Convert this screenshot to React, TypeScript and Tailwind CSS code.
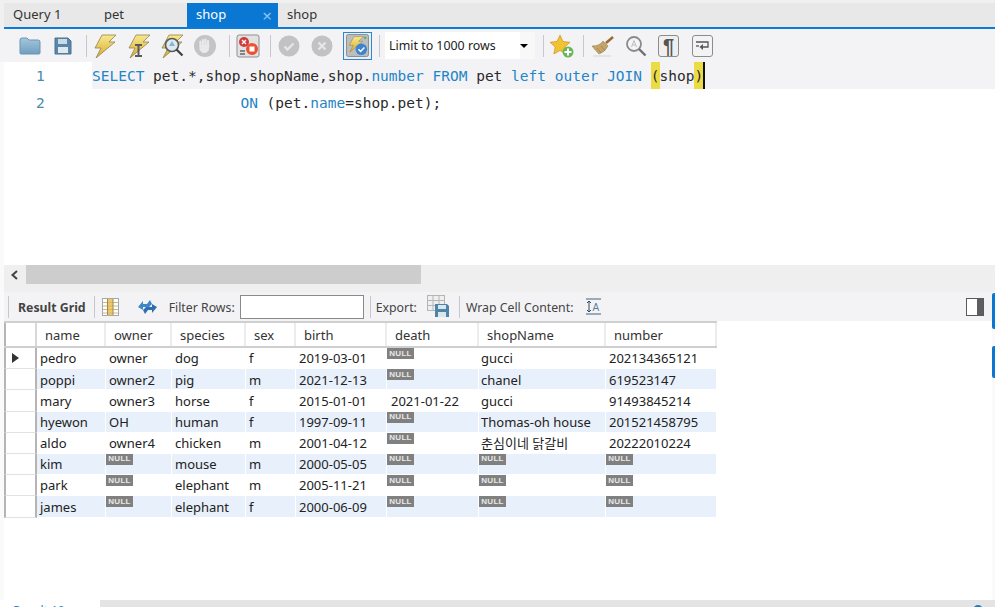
import { ReactNode } from "react";

const Sep = ({ ml }: { ml: string }) => <div className={`${ml} h-[22px] w-px shrink-0 bg-[#c8c8cc]`} />;

const Slot = ({ ml, children }: { ml: string; children: ReactNode }) => (
  <div className={`${ml} flex h-6 w-6 shrink-0 items-center justify-center`}>{children}</div>
);

const Bolt = ({ id }: { id: string }) => (
  <>
    <defs>
      <linearGradient id={id} x1="0" y1="0" x2="0" y2="1">
        <stop offset="0" stopColor="#f8e88e" />
        <stop offset="1" stopColor="#d8ab2c" />
      </linearGradient>
    </defs>
    <path d="M9 1h14l-7 7h6L3 24l5-10H2z" fill={`url(#${id})`} stroke="#8f8450" strokeWidth="0.8" />
  </>
);

const FolderIcon = () => (
  <svg width="22" height="18" viewBox="0 0 22 18">
    <defs>
      <linearGradient id="fld" x1="0" y1="0" x2="0" y2="1">
        <stop offset="0" stopColor="#a5c6dc" />
        <stop offset="1" stopColor="#6f9fbf" />
      </linearGradient>
    </defs>
    <path d="M1 3q0-2 2-2h5l2 2h9q2 0 2 2v11q0 1-1 1H2q-1 0-1-1z" fill="url(#fld)" stroke="#6a95b3" />
  </svg>
);

const SaveIcon = () => (
  <svg width="18" height="18" viewBox="0 0 18 18">
    <path d="M1 1h13l3 3v13H1z" fill="#5a87a8" stroke="#4a7291" />
    <rect x="4" y="2" width="9" height="5" fill="#c9dbe7" />
    <rect x="4" y="10" width="10" height="6" fill="#dfe9f0" />
  </svg>
);

const BoltIcon = () => (
  <svg width="24" height="24" viewBox="0 0 24 24">
    <Bolt id="b1" />
  </svg>
);

const BoltCursorIcon = () => (
  <svg width="24" height="24" viewBox="0 0 24 24">
    <Bolt id="b2" />
    <path d="M8 11h7M8 22h7M11.500 11v11" stroke="#5a5a5a" strokeWidth="2" fill="none" />
  </svg>
);

const BoltSearchIcon = () => (
  <svg width="24" height="24" viewBox="0 0 24 24">
    <Bolt id="b3" />
    <circle cx="12" cy="11" r="6.500" fill="#dcebf2" stroke="#5a5a5a" strokeWidth="1.600" />
    <path d="M12 7l3 5H9z" fill="#8ab4cf" />
    <path d="M16.500 15.500l6 6" stroke="#3f3f3f" strokeWidth="2.200" />
  </svg>
);

const HandIcon = () => (
  <svg width="24" height="24" viewBox="0 0 24 24">
    <circle cx="12" cy="12" r="11" fill="#c4c4c4" />
    <path d="M7.500 11V7.500M10 11V6M12.500 11V5.500M15 11.500V7" stroke="#e9e9e9" strokeWidth="2.200" fill="none" strokeLinecap="round" />
    <path d="M6.500 11h10l-1 6-3 2h-3l-3-3z" fill="#e9e9e9" />
  </svg>
);

const StopIcon = () => (
  <svg width="24" height="24" viewBox="0 0 24 24">
    <rect x="1" y="1" width="22" height="22" rx="2" fill="#e2e2e2" stroke="#8f8f8f" />
    <circle cx="8" cy="8" r="5" fill="#cf3a3a" />
    <path d="M6 6l4 4M10 6l-4 4" stroke="#fff" strokeWidth="1.300" />
    <circle cx="16" cy="15" r="6" fill="#ea5236" />
    <rect x="13.500" y="12.500" width="5" height="5" fill="#fff" />
    <path d="M4 17h5M4 20h5" stroke="#666" strokeWidth="1.300" />
  </svg>
);

const CheckIcon = () => (
  <svg width="22" height="22" viewBox="0 0 22 22">
    <circle cx="11" cy="11" r="10.500" fill="#c2c2c2" />
    <path d="M6.500 11.500l3 3 6-6" stroke="#e6e6e6" strokeWidth="2.400" fill="none" />
  </svg>
);

const CrossIcon = () => (
  <svg width="22" height="22" viewBox="0 0 22 22">
    <circle cx="11" cy="11" r="10.500" fill="#c2c2c2" />
    <path d="M7.500 7.500l7 7M14.500 7.500l-7 7" stroke="#e6e6e6" strokeWidth="2.400" />
  </svg>
);

const ToggleIcon = () => (
  <div className="ml-[9px] flex h-[28px] w-[29px] shrink-0 items-center justify-center border border-[#2f86cf] bg-[#e9eef3]">
    <svg width="23" height="23" viewBox="0 0 24 24">
      <rect x="0.500" y="0.500" width="23" height="23" rx="2" fill="#bdbdbd" stroke="#8c8c8c" />
      <g transform="translate(2 2) scale(0.7)">
        <Bolt id="b4" />
      </g>
      <circle cx="16" cy="16" r="6" fill="#3d84cf" />
      <path d="M13 16l2.200 2.200 4-4" stroke="#fff" strokeWidth="1.500" fill="none" />
      <circle cx="20" cy="4" r="1.500" fill="#5db55d" />
    </svg>
  </div>
);

const StarIcon = () => (
  <svg width="24" height="24" viewBox="0 0 24 24">
    <path d="M10 1l3 6.500 7 .8-5.200 4.700 1.400 7L10 16.500 3.800 20l1.400-7L0 8.300l7-.8z" fill="#f2c230" stroke="#c8952a" strokeWidth="0.700" />
    <circle cx="18" cy="18" r="5.500" fill="#6cb65a" />
    <path d="M18 14.500v7M14.500 18h7" stroke="#fff" strokeWidth="2" />
  </svg>
);

const BroomIcon = () => (
  <svg width="24" height="22" viewBox="0 0 24 22">
    <path d="M15 8l7-6" stroke="#9a6a35" strokeWidth="2.500" />
    <path d="M1 11q8 0 11-5l5 5q-3 6-9 8-3-3-7-8z" fill="#c4a468" stroke="#9b8050" strokeWidth="0.600" />
    <path d="M6 13l4 5M10 11l4 5" stroke="#a78a52" />
    <path d="M2 21h18" stroke="#d5d5d5" />
  </svg>
);

const FindIcon = () => (
  <svg width="22" height="22" viewBox="0 0 22 22">
    <circle cx="9" cy="9" r="7" fill="#f5f5f5" stroke="#8a8a8a" strokeWidth="1.800" />
    <path d="M6.500 12L9 5.500l2.500 6.500M7.500 10h3" stroke="#bdbdbd" fill="none" />
    <path d="M14 14l6.500 6.500" stroke="#6f6f6f" strokeWidth="2.400" />
  </svg>
);

const ParaIcon = () => (
  <div className="ml-[10px] flex h-[22px] w-[21px] shrink-0 items-center justify-center rounded-[3px] border border-[#8c8c8c] bg-[#efefef] font-['Liberation_Sans',sans-serif] text-[20px] leading-none font-bold text-[#555]">
    ¶
  </div>
);

const WrapIcon = () => (
  <div className="ml-[13px] flex h-[22px] w-[21px] shrink-0 items-center justify-center rounded-[3px] border border-[#8c8c8c] bg-[#f3f3f3]">
    <svg width="14" height="12" viewBox="0 0 14 12">
      <path d="M0 2h12v5H6" stroke="#555" strokeWidth="1.300" fill="none" />
      <path d="M7 4L3.500 7 7 10z" fill="#555" />
      <path d="M0 6h3" stroke="#555" strokeWidth="1.300" />
    </svg>
  </div>
);

const ColumnsIcon = () => (
  <svg width="17" height="18" viewBox="0 0 17 18">
    <rect x="0.500" y="0.500" width="16" height="17" fill="#fff" stroke="#a8a8a8" />
    <rect x="5.500" y="1" width="5.500" height="16" fill="#f2c85a" />
    <path d="M1 4.500h15M1 8h15M1 11.500h15M1 15h15" stroke="#c8b98a" />
    <path d="M5.500 1v16M11 1v16" stroke="#a08a4a" />
  </svg>
);

const RefreshIcon = () => (
  <svg width="21" height="18" viewBox="0 0 21 18">
    <path d="M1 9l5-6v3h4l3-4 2 4-3 3H6v3z" fill="#3f86c7" />
    <path d="M20 9l-5 6v-3h-4l-3 4-2-4 3-3h6V6z" fill="#2f6faf" />
  </svg>
);

const ExportIcon = () => (
  <svg width="23" height="23" viewBox="0 0 23 23">
    <rect x="0.500" y="0.500" width="17" height="15" fill="#efefef" stroke="#b5b5b5" />
    <path d="M6 1v14M12 1v14M1 5.500h16M1 10.500h16" stroke="#b5b5b5" />
    <path d="M8 9h12l2 2v11H8z" fill="#4f84a8" />
    <rect x="11" y="10" width="8" height="4" fill="#d9e6ee" />
    <rect x="11" y="17" width="8" height="5" fill="#d9e6ee" />
  </svg>
);

const WrapCellIcon = () => (
  <svg width="15" height="17" viewBox="0 0 15 17">
    <path d="M0 1h15M0 16h15" stroke="#44617a" strokeWidth="1.200" />
    <path d="M3 3v11M1 5l2-2 2 2M1 12l2 2 2-2" stroke="#2c4a62" fill="none" />
    <text x="6.500" y="13" fontSize="10" fontFamily="Liberation Sans" fill="#5b7f9b">A</text>
  </svg>
);

const PanelIcon = () => (
  <div className="mr-2 flex h-[18px] w-[18px] border border-[#5a5a5a] bg-white">
    <div className="ml-auto h-full w-[6px] bg-[#5e5e5e]" />
  </div>
);

const Null = () => (
  <div className="flex h-[11px] w-[27px] items-center justify-center bg-[#808080] font-['Liberation_Sans',sans-serif] text-[8px] leading-none font-bold tracking-[0.3px] text-[#e8e8e8]">
    NULL
  </div>
);

const columns = [
  { name: "name", w: "w-[69px]", pad: "pl-[3px]" },
  { name: "owner", w: "w-[66px]", pad: "pl-[3px]" },
  { name: "species", w: "w-[74px]", pad: "pl-[3px]" },
  { name: "sex", w: "w-[50px]", pad: "pl-[3px]" },
  { name: "birth", w: "w-[91px]", pad: "pl-[3px]" },
  { name: "death", w: "w-[92px]", pad: "pl-[4px]" },
  { name: "shopName", w: "w-[127px]", pad: "pl-[2px]" },
  { name: "number", w: "w-[111px]", pad: "pl-[3px]" },
];

const rows: (string | null)[][] = [
  ["pedro", "owner", "dog", "f", "2019-03-01", null, "gucci", "202134365121"],
  ["poppi", "owner2", "pig", "m", "2021-12-13", null, "chanel", "619523147"],
  ["mary", "owner3", "horse", "f", "2015-01-01", "2021-01-22", "gucci", "91493845214"],
  ["hyewon", "OH", "human", "f", "1997-09-11", null, "Thomas-oh house", "201521458795"],
  ["aldo", "owner4", "chicken", "m", "2001-04-12", null, "춘심이네 닭갈비", "20222010224"],
  ["kim", null, "mouse", "m", "2000-05-05", null, null, null],
  ["park", null, "elephant", "m", "2005-11-21", null, null, null],
  ["james", null, "elephant", "f", "2000-06-09", null, null, null],
];

const K = ({ children }: { children: ReactNode }) => <span className="text-[#1f85c6]">{children}</span>;

export default function App() {
  return (
    <div className="relative flex h-[607px] w-[995px] flex-col overflow-hidden bg-[#fafafa] font-['Noto_Sans','Noto_Sans_CJK_KR',sans-serif] text-[12px] text-[#222]">
      {/* tabs */}
      <div className="bg-[#f0f0f0]">
        <div className="h-[3px]" />
        <div className="ml-1 flex h-6 bg-[#e8e8e8] pl-[9px] text-[13px] text-[#333]">
          <div className="flex w-[91px] items-center">Query 1</div>
          <div className="flex w-[83px] items-center">pet</div>
          <div className="flex w-[91px] items-center justify-between bg-[#0a78d2] pr-[6px] pl-[9px] text-white">
            <span>shop</span>
            <span className="text-[17px] leading-none text-[#8cc4ee]">×</span>
          </div>
          <div className="flex items-center pl-[9px]">shop</div>
        </div>
        <div className="ml-1 h-[2px] bg-[#0a7bd6]" />
      </div>

      {/* sql toolbar */}
      <div className="flex h-[33px] shrink-0 items-center bg-[#f3f3f6] pl-1">
        <Slot ml="ml-[14px]"><FolderIcon /></Slot>
        <Slot ml="ml-[9px]"><SaveIcon /></Slot>
        <Sep ml="ml-[11px]" />
        <Slot ml="ml-[6px]"><BoltIcon /></Slot>
        <Slot ml="ml-[10px]"><BoltCursorIcon /></Slot>
        <Slot ml="ml-[9px]"><BoltSearchIcon /></Slot>
        <Slot ml="ml-[9px]"><HandIcon /></Slot>
        <Sep ml="ml-[12px]" />
        <Slot ml="ml-[6px]"><StopIcon /></Slot>
        <Sep ml="ml-[10px]" />
        <Slot ml="ml-[6px]"><CheckIcon /></Slot>
        <Slot ml="ml-[9px]"><CrossIcon /></Slot>
        <ToggleIcon />
        <Sep ml="ml-[7px]" />
        <div className="ml-[5px] flex h-[27px] w-[150px] shrink-0 items-center justify-between bg-white pl-1 text-[12.4px]">
          <span className="pt-[2px]">Limit to 1000 rows</span>
          <div className="flex h-full w-[15px] items-center bg-[#f8f8f8]">
            <div className="h-0 w-0 border-x-[4px] border-t-[4px] border-x-transparent border-t-black" />
          </div>
        </div>
        <Sep ml="ml-[8px]" />
        <Slot ml="ml-[6px]"><StarIcon /></Slot>
        <Sep ml="ml-[9px]" />
        <Slot ml="ml-[7px]"><BroomIcon /></Slot>
        <Slot ml="ml-[9px]"><FindIcon /></Slot>
        <ParaIcon />
        <WrapIcon />
      </div>

      {/* editor */}
      <div className="ml-1 flex h-[203px] shrink-0 flex-col bg-white font-['DejaVu_Sans_Mono',monospace] text-[14.5px] text-[#2a2a2a]">
        <div className="flex h-[27px] bg-[#f3f3f6]">
          <div className="h-full w-[88px] shrink-0 bg-white pl-8 leading-[29px] text-[#4a8bad]">1</div>
          <div className="h-[27px] whitespace-pre leading-[29px]">
            <K>SELECT</K> pet.*,shop.shopName,shop.<K>number</K> <K>FROM</K> pet <K>left</K> <K>outer</K> <K>JOIN</K>{" "}
            <span className="inline-block h-[27px] bg-[#ebdc45] align-top leading-[29px]">(</span>shop
            <span className="inline-block h-[27px] border-r-2 border-[#111] bg-[#ebdc45] align-top leading-[29px]">)</span>
          </div>
        </div>
        <div className="flex h-[26px] leading-[28px]">
          <div className="h-full w-[88px] shrink-0 pl-8 text-[#4a8bad]">2</div>
          <div className="whitespace-pre">
            {"                 "}
            <K>ON</K> (pet.<K>name</K>=shop.pet);
          </div>
        </div>
      </div>

      {/* horizontal scrollbar */}
      <div className="ml-1 h-[27px] shrink-0 bg-[#efefef]">
        <div className="flex h-[19px]">
          <div className="flex w-[21px] items-center justify-center">
            <svg width="9" height="10" viewBox="0 0 9 10">
              <path d="M7 1L2.500 5 7 9" stroke="#444" strokeWidth="2" fill="none" />
            </svg>
          </div>
          <div className="ml-px w-[395px] bg-[#cdcdcd]" />
        </div>
      </div>

      {/* result toolbar */}
      <div className="mr-[3px] ml-1 flex h-[29px] shrink-0 items-center bg-[#f3f3f6] pl-1 text-[12.3px] text-[#444]">
        <Sep ml="" />
        <span className="ml-[9px] pt-[3px] font-bold">Result Grid</span>
        <Sep ml="ml-[8px]" />
        <div className="ml-[7px]"><ColumnsIcon /></div>
        <div className="ml-[18px]"><RefreshIcon /></div>
        <span className="ml-[11px] pt-[3px]">Filter Rows:</span>
        <div className="ml-[5px] h-[24px] w-[124px] border border-[#8a8a8a] bg-white" />
        <Sep ml="ml-[6px]" />
        <span className="ml-[5px] pt-[3px]">Export:</span>
        <div className="ml-[10px]"><ExportIcon /></div>
        <Sep ml="ml-[9px]" />
        <span className="ml-[6px] pt-[3px]">Wrap Cell Content:</span>
        <div className="ml-[13px]"><WrapCellIcon /></div>
        <div className="ml-auto"><PanelIcon /></div>
      </div>

      {/* grid */}
      <div className="mr-[3px] ml-1 min-h-0 flex-1 bg-white text-[13px]">
        <div className="flex h-[27px] w-[713px] border-y-2 border-[#cfcfcf] text-[#333]">
          <div className="w-[33px] shrink-0 border-x-2 border-r-[#d8d8d8] border-l-[#b5b5b5]" />
          {columns.map((c) => (
            <div key={c.name} className={`${c.w} flex shrink-0 items-center border-r-2 border-[#ececec] pt-[3px] pl-2`}>
              {c.name}
            </div>
          ))}
        </div>
        {rows.map((row, i) => (
          <div key={row[0]} className="flex h-[21.2px] w-[713px]">
            <div className="flex w-[33px] shrink-0 items-center border-x-2 border-b border-r-[#b5b5b5] border-b-[#e2e2e2] border-l-[#b5b5b5] pl-[6px]">
              {i === 0 && <div className="h-0 w-0 border-y-[5px] border-l-[7px] border-y-transparent border-l-[#333]" />}
            </div>
            {row.map((v, j) => (
              <div
                key={columns[j].name}
                className={`${columns[j].w} ${i % 2 === 1 ? "bg-[#e8f0fb]" : "bg-white"} shrink-0 border-r border-b border-white`}
              >
                {v === null ? (
                  <Null />
                ) : (
                  <div className={`${columns[j].pad} flex h-full items-center pt-[2px] whitespace-nowrap`}>{v}</div>
                )}
              </div>
            ))}
          </div>
        ))}
      </div>

      {/* bottom tab strip, cut off by the window */}
      <div className="flex h-[7px] shrink-0 overflow-hidden bg-[#e4e4e4]">
        <div className="w-[100px] bg-white pl-[13px] leading-[21px] text-[#2b8ccb]">Result 10</div>
        <div className="mt-[5px] mr-[12px] ml-auto h-[10px] w-[10px] rounded-full bg-[#2a78c0]" />
      </div>

      {/* blue side tabs */}
      <div className="absolute top-[293px] right-0 h-[36px] w-[3px] rounded-l-[2px] bg-[#0a78d2]" />
      <div className="absolute top-[346px] right-0 h-[32px] w-[3px] rounded-l-[2px] bg-[#0a78d2]" />
    </div>
  );
}
